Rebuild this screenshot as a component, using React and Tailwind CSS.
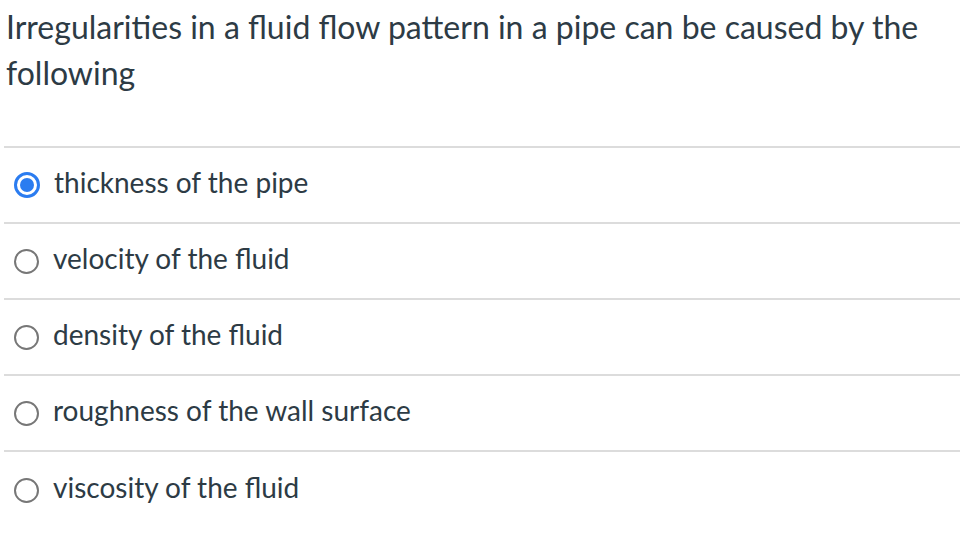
const options = [
  { label: 'thickness of the pipe', checked: true },
  { label: 'velocity of the fluid' },
  { label: 'density of the fluid' },
  { label: 'roughness of the wall surface' },
  { label: 'viscosity of the fluid' },
];

function Radio({ checked }) {
  if (checked) {
    return (
      <span className="flex h-[26px] w-[26px] shrink-0 items-center justify-center rounded-full border-[3px] border-[#2b7cf0] bg-white">
        <span className="h-[14px] w-[14px] rounded-full bg-[#2b7cf0]" />
      </span>
    );
  }
  return <span className="h-[25px] w-[25px] shrink-0 rounded-full border-2 border-[#777]" />;
}

export default function App() {
  return (
    <div className="h-[542px] w-[960px] bg-white pl-1 text-[#2d3b45]" style={{ fontFamily: 'Lato, sans-serif' }}>
      <p className="pl-[2px] pt-[4px] text-[32px] leading-[46px]">
        Irregularities in a fluid flow pattern in a pipe can be caused by the following
      </p>
      <div className="mt-[50px] border-t-2 border-[#dcdcdc]">
        {options.map((o, i) => (
          <div key={i} className="flex h-[76px] items-center gap-[14px] border-b-2 border-[#dcdcdc] pl-[10px] last:border-b-0">
            <Radio checked={o.checked} />
            <span className="pb-[6px] text-[28px]">{o.label}</span>
          </div>
        ))}
      </div>
    </div>
  );
}
